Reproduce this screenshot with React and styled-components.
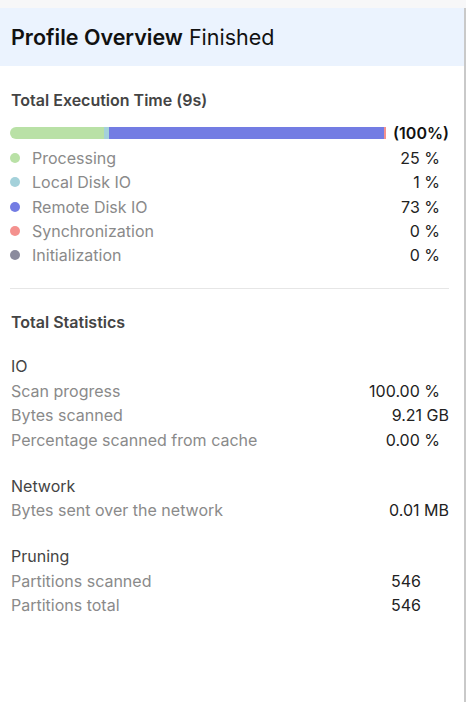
import React from 'react';
import styled, { createGlobalStyle } from 'styled-components';

const GlobalStyle = createGlobalStyle`
  html, body {
    margin: 0;
    padding: 0;
    background: #f7f7f8;
  }
  body {
    font-family: Inter, "Noto Sans", sans-serif;
  }
`;

const Panel = styled.div`
  margin-top: 8px;
  height: 694px;
  background: #ffffff;
  border-right: 2px solid #c9c9c9;
  box-sizing: border-box;
`;

const Header = styled.div`
  height: 58px;
  background: #ebf3fe;
  display: flex;
  align-items: center;
  padding-left: 11px;
  font-size: 21.5px;
  color: #111;
`;

const HeaderBold = styled.span`
  font-weight: 600;
  margin-right: 6px;
`;

const Body = styled.div`
  padding: 0 15px 0 10px;
`;

const SectionTitle = styled.div`
  font-size: 16px;
  font-weight: 600;
  color: #444;
  line-height: 20px;
  margin-top: ${(p) => p.top}px;
  padding-left: 1px;
`;

const BarRow = styled.div`
  display: flex;
  align-items: center;
  gap: 7px;
  height: 20px;
  margin-top: 13px;
`;

const Bar = styled.div`
  flex: 1;
  height: 12px;
  display: flex;
  border-radius: 6px 0 0 6px;
  overflow: hidden;
`;

const Segment = styled.div`
  height: 100%;
  background: ${(p) => p.color};
`;

const BarLabel = styled.span`
  font-size: 16px;
  font-weight: 600;
  color: #111;
`;

const Legend = styled.div`
  margin-top: 3px;
`;

const Row = styled.div`
  display: flex;
  align-items: center;
  height: 24.3px;
  font-size: 16px;
`;

const Dot = styled.span`
  width: 10px;
  height: 10px;
  border-radius: 50%;
  background: ${(p) => p.color};
  margin-right: 12px;
  flex-shrink: 0;
`;

const Label = styled.span`
  color: #8a8a8a;
  flex: 1;
  padding-left: ${(p) => (p.indent ? 0 : 1)}px;
`;

const Value = styled.span`
  color: #222;
  white-space: pre;
  padding-right: ${(p) => p.pad || 0}px;
`;

const Divider = styled.hr`
  border: none;
  border-top: 1px solid #e6e6e6;
  margin: 21px 0 0 0;
`;

const Group = styled.div`
  margin-top: ${(p) => p.top}px;
`;

const GroupTitle = styled.div`
  font-size: 16px;
  color: #444;
  line-height: 24.3px;
  padding-left: 1px;
`;

const segments = [
  { name: 'Processing', color: '#b9e1a6', pct: 25, width: 94 },
  { name: 'Local Disk IO', color: '#a4d1da', pct: 1, width: 5 },
  { name: 'Remote Disk IO', color: '#737ce3', pct: 73, width: 277 },
  { name: 'Synchronization', color: '#f4918e', pct: 0, width: 2 },
  { name: 'Initialization', color: '#8b8b9d', pct: 0, width: 0 },
];

const groups = [
  {
    title: 'IO',
    rows: [
      ['Scan progress', '100.00 %', 9],
      ['Bytes scanned', '9.21 GB', 0],
      ['Percentage scanned from cache', '0.00 %', 9],
    ],
  },
  {
    title: 'Network',
    rows: [['Bytes sent over the network', '0.01 MB', 0]],
  },
  {
    title: 'Pruning',
    rows: [
      ['Partitions scanned', '546', 28],
      ['Partitions total', '546', 28],
    ],
  },
];

export default function App() {
  return (
    <>
      <GlobalStyle />
      <Panel>
        <Header>
          <HeaderBold>Profile Overview</HeaderBold>Finished
        </Header>
        <Body>
          <SectionTitle top={24}>Total Execution Time (9s)</SectionTitle>
          <BarRow>
            <Bar>
              {segments.map((s) => (
                <Segment key={s.name} color={s.color} style={{ width: s.width + 'px' }} />
              ))}
            </Bar>
            <BarLabel>(100%)</BarLabel>
          </BarRow>
          <Legend>
            {segments.map((s) => (
              <Row key={s.name}>
                <Dot color={s.color} />
                <Label indent>{s.name}</Label>
                <Value pad={9}>{s.pct} %</Value>
              </Row>
            ))}
          </Legend>
          <Divider />
          <SectionTitle top={23}>Total Statistics</SectionTitle>
          {groups.map((g, i) => (
            <Group key={g.title} top={22}>
              <GroupTitle>{g.title}</GroupTitle>
              {g.rows.map(([label, value, pad]) => (
                <Row key={label}>
                  <Label>{label}</Label>
                  <Value pad={pad}>{value}</Value>
                </Row>
              ))}
            </Group>
          ))}
        </Body>
      </Panel>
    </>
  );
}
